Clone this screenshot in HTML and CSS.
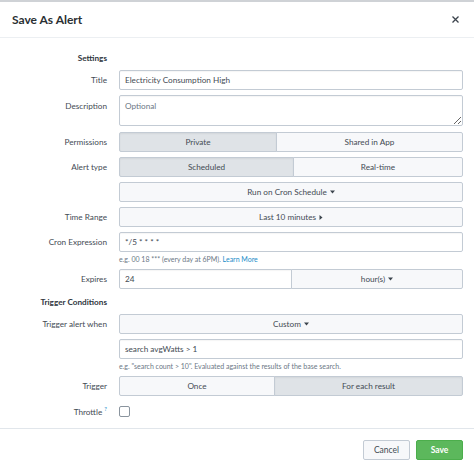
FILE: index.html
```html
<!DOCTYPE html>
<html>
<head>
<meta charset="utf-8">
<link rel="stylesheet" href="styles.css">
</head>
<body>
<div class="topbar"></div>
<div class="modal">
  <div class="header">
    <h1 class="title">Save As Alert</h1>
    <span class="close"><svg width="7" height="7" viewBox="0 0 7 7"><path d="M0.5 0.5L6.5 6.5M6.5 0.5L0.5 6.5" stroke="#3c444d" stroke-width="1.3"/></svg></span>
  </div>
  <div class="body">
    <div class="row head"><div class="label section">Settings</div><div></div></div>
    <div class="row"><div class="label">Title</div><div class="control"><input class="input" type="text" value="Electricity Consumption High"></div></div>
    <div class="row tall"><div class="label">Description</div><div class="control"><textarea class="input area" placeholder="Optional"></textarea></div></div>
    <div class="row"><div class="label">Permissions</div><div class="control"><div class="seg"><span class="btn on w-perm">Private</span><span class="btn">Shared in App</span></div></div></div>
    <div class="row"><div class="label">Alert type</div><div class="control"><div class="seg"><span class="btn on w-type">Scheduled</span><span class="btn">Real-time</span></div></div></div>
    <div class="row"><div class="label"></div><div class="control"><span class="btn full">Run on Cron Schedule <svg class="caret" width="5" height="4" viewBox="0 0 5 4"><path d="M0 0.5H5L2.5 3.5Z" fill="#3c444d"/></svg></span></div></div>
    <div class="row"><div class="label">Time Range</div><div class="control"><span class="btn full">Last 10 minutes <svg class="caret" width="4" height="5" viewBox="0 0 4 5"><path d="M0.5 0V5L3.5 2.5Z" fill="#3c444d"/></svg></span></div></div>
    <div class="row"><div class="label">Cron Expression</div><div class="control"><input class="input" type="text" value="*/5 * * * *"></div></div>
    <div class="help">e.g. 00 18 *** (every day at 6PM). <a class="link">Learn More</a></div>
    <div class="row"><div class="label">Expires</div><div class="control"><div class="seg"><input class="input left w-exp" type="text" value="24"><span class="btn">hour(s) <svg class="caret" width="5" height="4" viewBox="0 0 5 4"><path d="M0 0.5H5L2.5 3.5Z" fill="#3c444d"/></svg></span></div></div></div>
    <div class="row head2"><div class="label section">Trigger Conditions</div><div></div></div>
    <div class="row"><div class="label">Trigger alert when</div><div class="control"><span class="btn full">Custom <svg class="caret" width="5" height="4" viewBox="0 0 5 4"><path d="M0 0.5H5L2.5 3.5Z" fill="#3c444d"/></svg></span></div></div>
    <div class="row"><div class="label"></div><div class="control"><input class="input" type="text" value="search avgWatts &gt; 1"></div></div>
    <div class="help">e.g. "search count &gt; 10". Evaluated against the results of the base search.</div>
    <div class="row"><div class="label">Trigger</div><div class="control"><div class="seg"><span class="btn w-trig">Once</span><span class="btn on">For each result</span></div></div></div>
    <div class="row check"><div class="label">Throttle <sup class="q">?</sup></div><div class="control"><span class="box"></span></div></div>
  </div>
  <div class="footer">
    <span class="fbtn cancel">Cancel</span>
    <span class="fbtn save">Save</span>
  </div>
</div>
</body>
</html>
```

FILE: styles.css
```css
* { box-sizing: border-box; }
html, body { margin: 0; padding: 0; background: #fff; }
body {
  width: 474px;
  height: 468px;
  overflow: hidden;
  font-family: Lato, "Liberation Sans", sans-serif;
  font-size: 8.2px;
  color: #434b54;
}
.topbar { height: 2px; background: #cfd2d6; }
.header {
  height: 36px;
  display: flex;
  align-items: center;
  justify-content: space-between;
  padding: 0 15px 0 12px;
  border-bottom: 1px solid #eceff2;
}
.title {
  margin: 0;
  font-size: 12px;
  font-weight: 700;
  color: #2b3033;
}
.close { display: flex; }
.body {
  padding: 13px 11px 11px 0;
}
.row {
  display: grid;
  grid-template-columns: 107px 1fr;
  column-gap: 12px;
  align-items: center;
  height: 20px;
  margin-bottom: 5px;
}
.row.tall { height: 31px; align-items: start; margin-bottom: 6px; }
.row.tall .label { padding-top: 6px; }
.row.head { height: 14px; margin-bottom: 5px; }
.row.head2 { height: 14px; margin-top: 6px; margin-bottom: 5px; }
.row.check { height: 11px; margin-top: 10px; margin-bottom: 0; }
.label {
  text-align: right;
  white-space: nowrap;
}
.section { font-weight: 700; color: #2f363d; }
.control { height: 100%; min-width: 0; }
.input {
  display: block;
  width: 100%;
  height: 100%;
  border: 1px solid #c3cbd4;
  border-radius: 2px;
  background: #fff;
  padding: 0 5px;
  font: inherit;
  color: #434b54;
  outline: none;
  box-shadow: inset 0 1px 1px rgba(0,0,0,0.04);
}
.area { resize: vertical; padding-top: 5px; }
.area::placeholder { color: #6b7785; }
.seg { display: flex; height: 100%; }
.seg > * { flex: 1; }
.seg > * + * { margin-left: -1px; }
.seg .btn:first-child { border-radius: 2px 0 0 2px; }
.seg .btn:last-child { border-radius: 0 2px 2px 0; }
.seg .left { border-radius: 2px 0 0 2px; flex: none; }
.btn {
  display: flex;
  align-items: center;
  justify-content: center;
  height: 100%;
  border: 1px solid #c3cbd4;
  background: #f7f8fa;
  border-radius: 2px;
  color: #434b54;
  white-space: nowrap;
}
.btn.on { background: #dfe3e7; box-shadow: inset 0 1px 2px rgba(0,0,0,0.06); }
.btn.full { width: 100%; }
.w-perm { flex: none; width: 158px; }
.w-type { flex: none; width: 175px; }
.w-exp { width: 173px; }
.w-trig { flex: none; width: 156px; }
.caret { margin-left: 3px; }
.help {
  margin: -4px 0 4px 119px;
  height: 12px;
  line-height: 12px;
  font-size: 7px;
  color: #6b7785;
}
.link { color: #1a8dc9; }
.q { font-size: 6px; color: #1a8dc9; vertical-align: top; position: relative; top: -2px; }
.box {
  display: block;
  width: 11px;
  height: 11px;
  border: 1px solid #8a949e;
  border-radius: 2px;
  background: #fff;
}
.footer {
  border-top: 1px solid #e1e6eb;
  display: flex;
  justify-content: flex-end;
  gap: 6px;
  padding: 11px 11px 0 0;
}
.fbtn {
  display: flex;
  align-items: center;
  justify-content: center;
  height: 20px;
  border-radius: 2px;
  font-size: 8.5px;
}
.cancel { width: 47px; border: 1px solid #c3cbd4; background: #f7f8fa; color: #434b54; }
.save { width: 47px; background: #5cb85c; color: #fff; font-weight: 700; border: 1px solid #4cae4c; }
```
